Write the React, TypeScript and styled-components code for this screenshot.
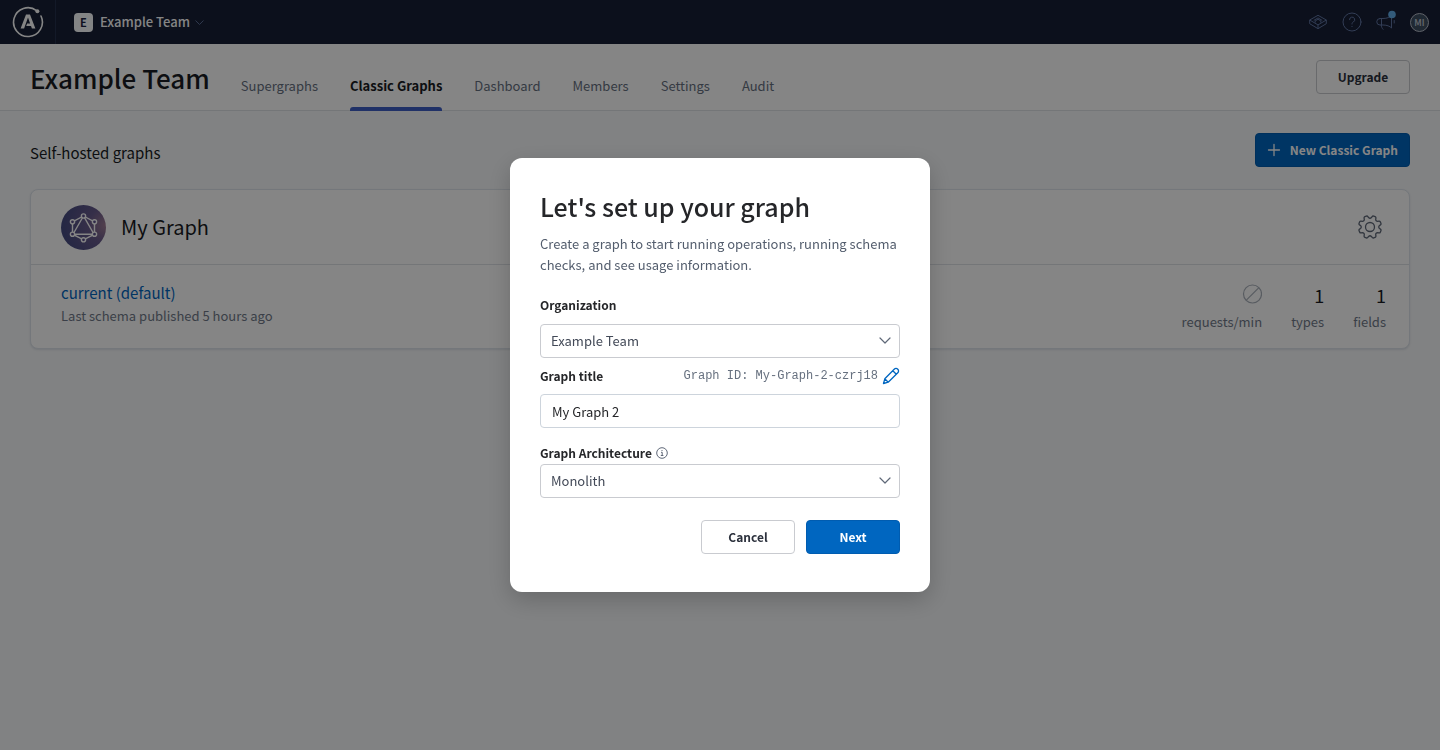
import React, { useState } from "react";
import styled, { createGlobalStyle, css } from "styled-components";

const sans = `"Noto Sans CJK SC", "Source Sans Pro", sans-serif`;
const mono = `"Liberation Mono", monospace`;

const GlobalStyle = createGlobalStyle`
  * { box-sizing: border-box; }
  html, body, #root { min-height: 100vh; }
  body {
    margin: 0;
    background: #f7f9fb;
    color: #191c23;
    font-family: ${sans};
    font-size: 13px;
    line-height: 18px;
  }
  button, input, select { font: inherit; margin: 0; }
  h1, h2, h3, p { margin: 0; }
`;

const Page = styled.div`
  display: flex;
  flex-direction: column;
  min-height: 100vh;
`;

const TopBar = styled.header`
  display: flex;
  align-items: center;
  height: 44px;
  padding-right: 11px;
  background: #171f36;
`;

const LogoLink = styled.a`
  display: flex;
  align-items: center;
  justify-content: center;
  width: 56px;
  height: 44px;
  border-right: 1px solid #26304d;
`;

const TeamSwitcher = styled.button`
  display: flex;
  align-items: center;
  margin-left: 18px;
  padding: 0;
  border: 0;
  background: none;
  color: #fff;
  font-weight: 500;
`;

const TeamInitial = styled.span`
  width: 19px;
  height: 19px;
  margin-right: 7px;
  border-radius: 4px;
  background: #fcfdff;
  color: #1b2240;
  font-size: 11px;
  font-weight: 700;
  line-height: 19px;
  text-align: center;
`;

const TeamChevron = styled.svg`
  margin-left: 4px;
  color: #5b6c94;
`;

const Tools = styled.div`
  display: flex;
  align-items: center;
  gap: 14px;
  margin-left: auto;
`;

const ToolButton = styled.button`
  display: flex;
  padding: 0;
  border: 0;
  background: none;
  color: #6176a4;
`;

const Avatar = styled.button`
  width: 19px;
  height: 19px;
  padding: 0;
  border: 1px solid #b7bcc9;
  border-radius: 50%;
  background: #3f5063;
  color: #c5ccd8;
  font-size: 9px;
  font-weight: 500;
  line-height: 17px;
`;

const PageHeader = styled.div`
  display: flex;
  height: 67px;
  padding: 0 30px;
  border-bottom: 1px solid #dfe2e7;
  background: #fff;
`;

const PageTitle = styled.h1`
  margin-right: 31px;
  padding-top: 15px;
  font-size: 26px;
  font-weight: 500;
  line-height: 38px;
`;

const Tabs = styled.nav`
  display: flex;
  gap: 32px;
  margin-bottom: -1px;
`;

const Tab = styled.a<{ $active?: boolean }>`
  display: flex;
  flex-direction: column;
  justify-content: flex-end;
  color: #66707f;
  text-decoration: none;

  &::after {
    content: "";
    height: 4px;
    margin-top: 12px;
    border-radius: 3px 3px 0 0;
  }
  ${(p) =>
    p.$active &&
    css`
      color: #191c23;
      font-weight: 700;
      &::after { background: #3f5fc6; }
    `}
`;

const Button = styled.button<{ $primary?: boolean }>`
  display: flex;
  align-items: center;
  justify-content: center;
  gap: 9px;
  height: 34px;
  min-width: 94px;
  padding: 0 11px;
  border: 1px solid ${(p) => (p.$primary ? "#005cb0" : "#c9cbd0")};
  border-radius: 4px;
  background: ${(p) => (p.$primary ? "#0066c0" : "#fff")};
  color: ${(p) => (p.$primary ? "#fff" : "#2b303c")};
  font-size: 12px;
  font-weight: 700;
`;

const HeaderAction = styled.div`
  margin-left: auto;
  padding-top: 16px;
`;

const Content = styled.main`
  flex: 1;
  padding: 22px 30px;
`;

const SectionHead = styled.div`
  display: flex;
  align-items: center;
  justify-content: space-between;
  margin-bottom: 22px;
`;

const SectionTitle = styled.h2`
  padding-top: 6px;
  font-size: 15px;
  font-weight: 400;
`;

const Card = styled.section`
  border: 1px solid #dfe5ec;
  border-radius: 8px;
  background: #fff;
  box-shadow: 0 1px 2px rgba(40, 60, 90, 0.12);
`;

const CardHead = styled.div`
  display: flex;
  align-items: center;
  gap: 15px;
  height: 75px;
  padding: 0 27px 0 30px;
  border-bottom: 1px solid #dfe2e7;
`;

const GraphName = styled.h3`
  font-size: 20px;
  font-weight: 400;
  line-height: 28px;
`;

const GearButton = styled.button`
  display: flex;
  margin-left: auto;
  padding: 0;
  border: 0;
  background: none;
  color: #5f6878;
`;

const CardBody = styled.div`
  display: flex;
  justify-content: space-between;
  height: 83px;
  padding: 18px 23px 0 30px;
`;

const VariantLink = styled.a`
  display: block;
  margin-bottom: 4px;
  color: #0066c0;
  font-size: 15px;
  line-height: 20px;
  text-decoration: none;
`;

const Muted = styled.p`
  color: #717a8a;
`;

const Stats = styled.div`
  display: flex;
  gap: 29px;
`;

const Stat = styled.div`
  display: flex;
  flex-direction: column;
  align-items: flex-end;
  justify-content: space-between;
  height: 48px;
`;

const StatValue = styled.span`
  font-size: 18px;
  line-height: 24px;
`;

const StatIcon = styled.svg`
  color: #a9b0ba;
`;

const Backdrop = styled.div`
  position: fixed;
  inset: 0;
  display: flex;
  align-items: center;
  justify-content: center;
  background: rgba(0, 0, 0, 0.48);
`;

const Modal = styled.form`
  display: flex;
  flex-direction: column;
  width: 420px;
  padding: 29px 30px 38px;
  border-radius: 12px;
  background: #fff;
  box-shadow: 0 8px 24px rgba(0, 0, 0, 0.2);
`;

const ModalTitle = styled.h2`
  margin-bottom: 8px;
  color: #252629;
  font-size: 25px;
  font-weight: 500;
  line-height: 38px;
`;

const ModalText = styled.p`
  margin-bottom: 21px;
  color: #535d6d;
  line-height: 21px;
`;

const Label = styled.label`
  color: #252629;
  font-size: 12px;
  font-weight: 700;
`;

const Field = styled.div<{ $gap: number; $after: number }>`
  display: flex;
  flex-direction: column;
  gap: ${(p) => p.$gap}px;
  margin-bottom: ${(p) => p.$after}px;
`;

const LabelRow = styled.div`
  display: flex;
  align-items: center;
  gap: 4px;
  height: 18px;
`;

const GraphId = styled.span`
  margin-left: auto;
  color: #66707f;
  font-family: ${mono};
  font-size: 12px;
`;

const IconButton = styled.button`
  display: flex;
  padding: 0;
  border: 0;
  background: none;
  color: #0066c0;
`;

const InfoButton = styled(IconButton)`
  color: #5f6878;
`;

const control = css`
  width: 100%;
  height: 34px;
  border: 1px solid #c9cbd0;
  border-radius: 4px;
  background: #fff;
  outline: none;
`;

const SelectBox = styled.div`
  position: relative;
`;

const Select = styled.select`
  ${control}
  padding: 0 30px 0 10px;
  appearance: none;
  color: #424957;
`;

const SelectChevron = styled.svg`
  position: absolute;
  top: 13px;
  right: 9px;
  color: #5f6878;
  pointer-events: none;
`;

const TextInput = styled.input`
  ${control}
  padding: 0 11px;
  border-color: #cdd4dc;
  color: #252629;
`;

const Actions = styled.div`
  display: flex;
  justify-content: flex-end;
  gap: 11px;
`;

const Chevron = () => (
  <SelectChevron width="12" height="8" viewBox="0 0 12 8" fill="none" stroke="currentColor" strokeWidth="1.2" strokeLinecap="round" strokeLinejoin="round" aria-hidden="true">
    <path d="M1 1l5 5 5-5" />
  </SelectChevron>
);

const ApolloLogo = () => (
  <svg width="32" height="32" viewBox="0 0 32 32" fill="none" stroke="#fff" aria-hidden="true">
    <path d="M24.6 4.6A14.4 14.4 0 1 0 29 10" strokeWidth="1.6" strokeLinecap="round" />
    <circle cx="25.4" cy="5.3" r="2" fill="#fff" stroke="none" />
    <path fill="#fff" stroke="none" d="M14 8.6h4l5.4 14h-3.5l-.9-2.6h-4.8l.9-2.6h3l-2.1-6-3.9 11.2H8.600z" />
  </svg>
);

const GraphBadge = () => (
  <svg width="45" height="45" viewBox="0 0 45 45" fill="none" aria-hidden="true">
    <defs>
      <radialGradient id="badge" cx="1" cy="0.45" r="0.95">
        <stop offset="0" stopColor="#a07d94" />
        <stop offset="0.4" stopColor="#685a8c" />
        <stop offset="1" stopColor="#484d82" />
      </radialGradient>
    </defs>
    <circle cx="22.5" cy="22.5" r="22.5" fill="url(#badge)" />
    <g stroke="#fff" strokeWidth="1.4">
      <path d="M22.5 11l11 5.8v12.4l-11 5.6-11-5.6V16.8z" />
      <path d="M22.5 11L12 29.2h21z" />
    </g>
    <g stroke="#fff" strokeWidth="1.4" fill="#5b508b">
      <circle cx="22.5" cy="11" r="2.1" />
      <circle cx="33.5" cy="16.8" r="2.1" />
      <circle cx="33.5" cy="29.2" r="2.1" />
      <circle cx="22.5" cy="34.8" r="2.1" />
      <circle cx="11.5" cy="29.2" r="2.1" />
      <circle cx="11.5" cy="16.8" r="2.1" />
    </g>
  </svg>
);

const gearPath = (() => {
  const point = (radius: number, degrees: number) => {
    const a = (degrees * Math.PI) / 180;
    return `${(12 + radius * Math.sin(a)).toFixed(2)} ${(12 - radius * Math.cos(a)).toFixed(2)}`;
  };
  const parts: string[] = [];
  for (let i = 0; i < 8; i++) {
    const c = i * 45 + 22.5;
    parts.push(`${i ? "L" : "M"}${point(9.6, c - 14)}`);
    parts.push(`L${point(10.7, c - 11)}`);
    parts.push(`Q${point(11.6, c - 9)} ${point(11.5, c - 4)}`);
    parts.push(`L${point(11.5, c + 4)}`);
    parts.push(`Q${point(11.6, c + 9)} ${point(10.7, c + 11)}`);
    parts.push(`L${point(9.6, c + 14)}`);
    parts.push(`Q${point(8, c + 22.5)} ${point(9.6, c + 31)}`);
  }
  return parts.join("") + "Z";
})();

const tabs = ["Supergraphs", "Classic Graphs", "Dashboard", "Members", "Settings", "Audit"];

export default function App() {
  const [title, setTitle] = useState("My Graph 2");

  return (
    <>
      <GlobalStyle />
      <Page>
        <TopBar>
          <LogoLink href="#" aria-label="Apollo home"><ApolloLogo /></LogoLink>
          <TeamSwitcher type="button">
            <TeamInitial>E</TeamInitial>
            Example Team
            <TeamChevron width="11" height="7" viewBox="0 0 11 7" fill="none" stroke="currentColor" aria-hidden="true">
              <path d="M1.5 1.5l4 4 4-4" />
            </TeamChevron>
          </TeamSwitcher>
          <Tools>
            <ToolButton type="button" aria-label="Sandbox">
              <svg width="20" height="20" viewBox="0 0 20 20" fill="none" stroke="currentColor" strokeLinejoin="round">
                <path d="M10 3.3L18.3 8v3.700L10 16.700 1.700 11.700V8zM1.700 8L10 12.900 18.300 8M10 12.900v3.800M5.800 8.400L10 5.900l4.200 2.500M7.200 10.600V8.900L10 7.300l2.800 1.600v1.700" />
              </svg>
            </ToolButton>
            <ToolButton type="button" aria-label="Help">
              <svg width="20" height="20" viewBox="0 0 20 20" fill="none" stroke="currentColor" strokeLinecap="round">
                <circle cx="10" cy="10" r="9" />
                <path d="M7.500 7.700a2.600 2.600 0 1 1 3.800 2.300c-.9.500-1.300 1-1.300 2M10 14.300v.3" />
              </svg>
            </ToolButton>
            <ToolButton type="button" aria-label="Announcements">
              <svg width="20" height="24" viewBox="0 0 20 24" fill="none" stroke="currentColor" strokeLinecap="round" strokeLinejoin="round">
                <path d="M4 8.500h3c4 0 7-1.300 8.500-3v12.500c-1.500-1.700-4.500-3-8.500-3H4a3.200 3.200 0 0 1 0-6.500zM5.500 8.500V15M5.200 15c.2 1.900.8 3.300 1.800 4.300M18.200 10.500v2.500" />
                <circle cx="16" cy="4.500" r="3.800" fill="#62aeea" stroke="none" />
              </svg>
            </ToolButton>
            <Avatar type="button">MI</Avatar>
          </Tools>
        </TopBar>

        <PageHeader>
          <PageTitle>Example Team</PageTitle>
          <Tabs>
            {tabs.map((name) => (
              <Tab key={name} href="#" $active={name === "Classic Graphs"}>{name}</Tab>
            ))}
          </Tabs>
          <HeaderAction><Button type="button">Upgrade</Button></HeaderAction>
        </PageHeader>

        <Content>
          <SectionHead>
            <SectionTitle>Self-hosted graphs</SectionTitle>
            <Button type="button" $primary>
              <svg width="14" height="14" viewBox="0 0 14 14" stroke="currentColor" strokeWidth="1.3" strokeLinecap="round" aria-hidden="true">
                <path d="M7 1.500v11M1.500 7h11" />
              </svg>
              New Classic Graph
            </Button>
          </SectionHead>
          <Card>
            <CardHead>
              <GraphBadge />
              <GraphName>My Graph</GraphName>
              <GearButton type="button" aria-label="Graph settings">
                <svg width="24" height="24" viewBox="0 0 24 24" fill="none" stroke="currentColor" strokeWidth="1.3" strokeLinejoin="round">
                  <path d={gearPath} />
                  <circle cx="12" cy="12" r="4.500" />
                </svg>
              </GearButton>
            </CardHead>
            <CardBody>
              <div>
                <VariantLink href="#">current (default)</VariantLink>
                <Muted>Last schema published 5 hours ago</Muted>
              </div>
              <Stats>
                <Stat>
                  <StatIcon width="20" height="22" viewBox="0 0 20 22" fill="none" stroke="currentColor" strokeWidth="1.2" aria-label="No data">
                    <circle cx="10.500" cy="11" r="9" />
                    <path d="M4.100 17.400L16.900 4.600" />
                  </StatIcon>
                  <Muted>requests/min</Muted>
                </Stat>
                <Stat><StatValue>1</StatValue><Muted>types</Muted></Stat>
                <Stat><StatValue>1</StatValue><Muted>fields</Muted></Stat>
              </Stats>
            </CardBody>
          </Card>
        </Content>
      </Page>

      <Backdrop>
        <Modal role="dialog" aria-modal="true" aria-labelledby="dialog-title" onSubmit={(e) => e.preventDefault()}>
          <ModalTitle id="dialog-title">Let's set up your graph</ModalTitle>
          <ModalText>
            Create a graph to start running operations, running schema checks, and see usage information.
          </ModalText>
          <Field $gap={10} $after={9}>
            <LabelRow><Label htmlFor="organization">Organization</Label></LabelRow>
            <SelectBox>
              <Select id="organization"><option>Example Team</option></Select>
              <Chevron />
            </SelectBox>
          </Field>
          <Field $gap={9} $after={16}>
            <LabelRow>
              <Label htmlFor="graph-title">Graph title</Label>
              <GraphId>Graph ID: My-Graph-2-czrj18</GraphId>
              <IconButton type="button" aria-label="Edit graph ID">
                <svg width="18" height="18" viewBox="0 0 18 18" fill="none" stroke="currentColor" strokeWidth="1.3" strokeLinejoin="round">
                  <path d="M1.500 16.500l1.300-4.700 9.400-9.600a2.500 2.500 0 0 1 3.600 3.600L6.200 15.200zM10.800 3.700l3.500 3.500M2.800 11.800l3.400 3.400" />
                </svg>
              </IconButton>
            </LabelRow>
            <TextInput id="graph-title" value={title} onChange={(e) => setTitle(e.target.value)} />
          </Field>
          <Field $gap={2} $after={22}>
            <LabelRow>
              <Label htmlFor="architecture">Graph Architecture</Label>
              <InfoButton type="button" aria-label="About graph architecture">
                <svg width="12" height="12" viewBox="0 0 12 12" fill="none" stroke="currentColor">
                  <circle cx="6" cy="6" r="5.300" />
                  <path d="M5 5.300h1.200v3M4.800 8.500h2.600M6 3v1" />
                </svg>
              </InfoButton>
            </LabelRow>
            <SelectBox>
              <Select id="architecture"><option>Monolith</option></Select>
              <Chevron />
            </SelectBox>
          </Field>
          <Actions>
            <Button type="button">Cancel</Button>
            <Button type="submit" $primary>Next</Button>
          </Actions>
        </Modal>
      </Backdrop>
    </>
  );
}
